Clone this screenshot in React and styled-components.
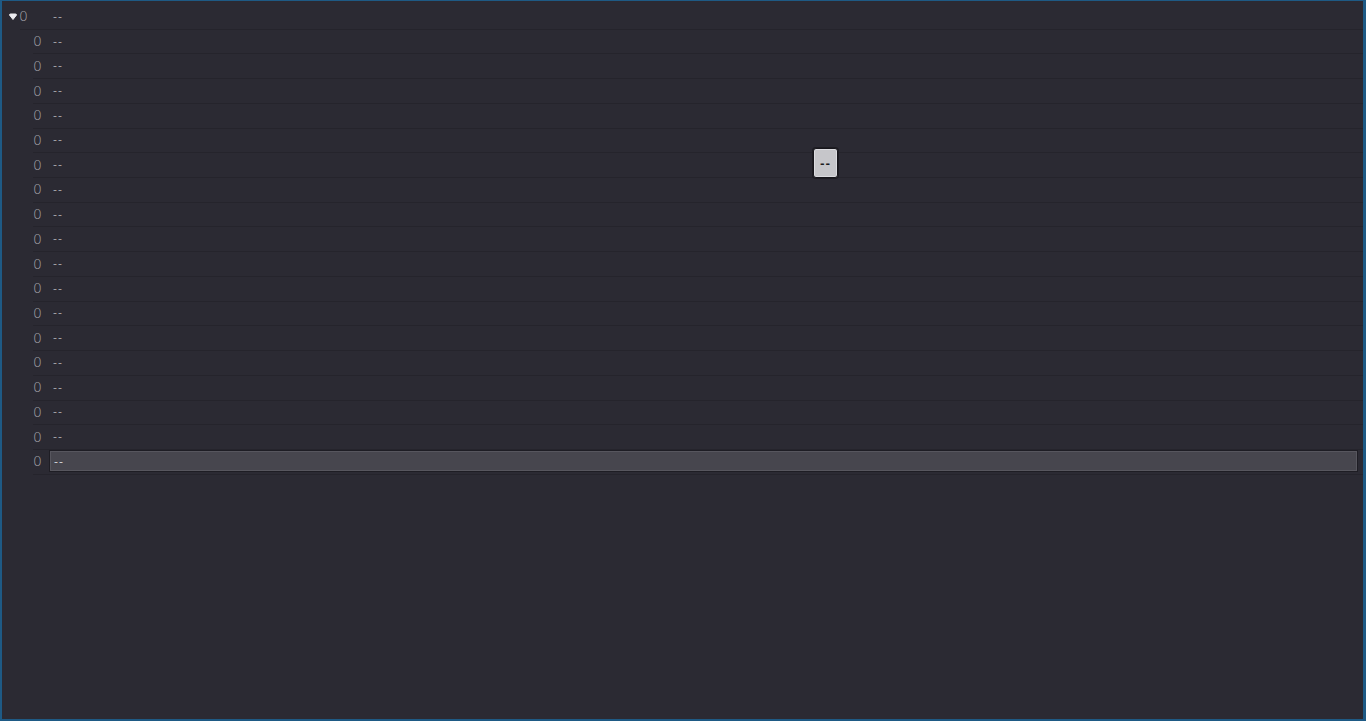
import React from "react";
import styled, { createGlobalStyle } from "styled-components";

const GlobalStyle = createGlobalStyle`
  html, body {
    margin: 0;
    padding: 0;
    background: #2b2a33;
  }
  body {
    font-family: "DejaVu Sans", "Liberation Sans", sans-serif;
  }
`;

const Frame = styled.div`
  position: relative;
  box-sizing: border-box;
  width: 1366px;
  height: 721px;
  background: #2b2a33;
  border-style: solid;
  border-color: #1e5a85;
  border-width: 1px 3px 2px 2px;
  padding-top: 4px;
  overflow: hidden;
`;

const Row = styled.div`
  position: relative;
  display: flex;
  align-items: center;
  height: 24.72px;
  box-sizing: border-box;
  padding-bottom: 2px;
  &::after {
    content: "";
    position: absolute;
    left: ${(p) => (p.$root ? "18px" : "31px")};
    right: 0;
    bottom: 0;
    height: 1px;
    background: #25242c;
  }
`;

const Index = styled.div`
  display: flex;
  align-items: center;
  justify-content: ${(p) => (p.$root ? "flex-start" : "flex-end")};
  width: 40px;
  padding-left: ${(p) => (p.$root ? "6px" : "0")};
  box-sizing: border-box;
  color: #a2a1a8;
  font-size: 14px;
  font-weight: 200;
  gap: 1px;
`;

const CaretIcon = styled.svg`
  width: 10px;
  height: 8px;
  margin-top: 1px;
  flex-shrink: 0;
`;

const Caret = () => (
  <CaretIcon viewBox="0 0 10 8">
    <path
      d="M1.5 2 Q1.5 1 2.5 1 H7.5 Q8.5 1 8.5 2 L5 6.5 Z"
      fill="#ececf0"
      stroke="#ececf0"
      strokeWidth="1"
      strokeLinejoin="round"
    />
  </CaretIcon>
);

const Value = styled.div`
  margin-left: 11px;
  color: #a9a8ae;
  font-size: 11px;
  letter-spacing: 1px;
`;

const Field = styled.div`
  display: flex;
  align-items: center;
  flex: 1;
  margin-left: 8px;
  margin-right: 6px;
  height: 20px;
  box-sizing: border-box;
  background: #47464e;
  border: 1px solid #57565e;
  box-shadow: 0 0 0 1px #1e1d24;
  padding-left: 3px;
  color: #d8d8dc;
  font-size: 11px;
  letter-spacing: 1px;
`;

const FloatButton = styled.button`
  position: absolute;
  left: 811px;
  top: 147px;
  width: 25px;
  height: 30px;
  padding: 0;
  background: #c6c6ca;
  border: 1px solid #17161c;
  border-radius: 3px;
  box-shadow: inset 0 0 0 1px #dcdce0, 0 0 0 1px #1d1c22;
  color: #1c1c20;
  font-family: "DejaVu Sans", sans-serif;
  font-size: 11px;
  font-weight: bold;
  letter-spacing: 1px;
  cursor: pointer;
`;

const rows = Array.from({ length: 17 }, (_, i) => i);

export default function App() {
  return (
    <>
      <GlobalStyle />
      <Frame>
        <Row $root>
          <Index $root>
            <Caret />
            0
          </Index>
          <Value>--</Value>
        </Row>
        {rows.map((i) => (
          <Row key={i}>
            <Index>0</Index>
            <Value>--</Value>
          </Row>
        ))}
        <Row>
          <Index>0</Index>
          <Field>--</Field>
        </Row>
        <FloatButton>--</FloatButton>
      </Frame>
    </>
  );
}
